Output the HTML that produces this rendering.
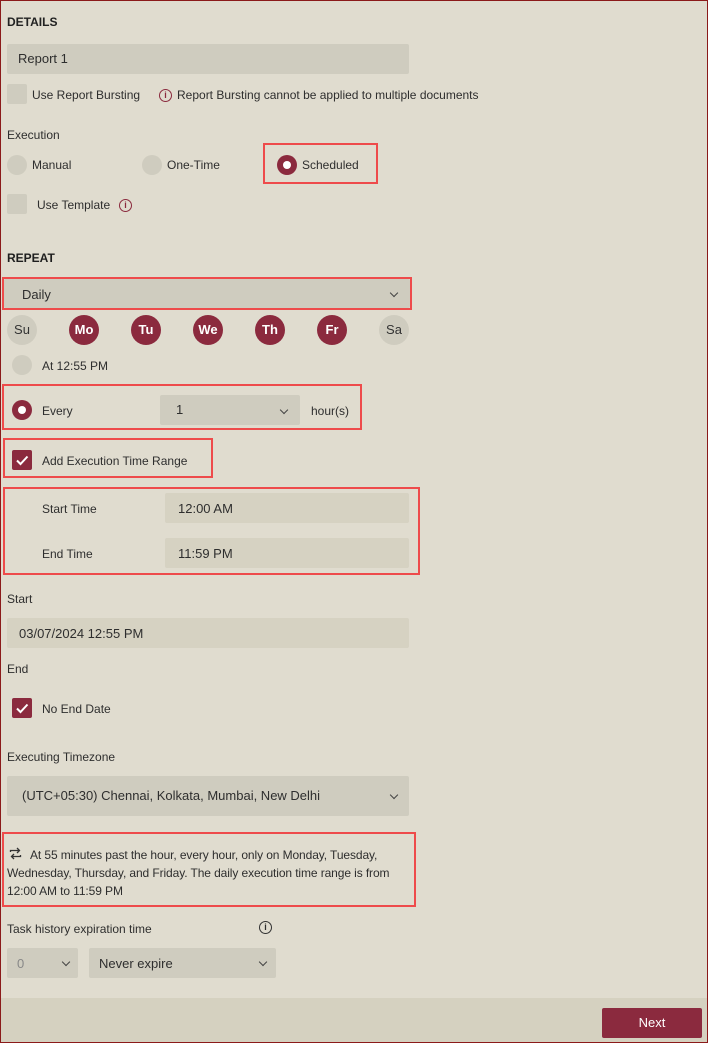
<!DOCTYPE html>
<html><head><meta charset="utf-8"><style>
*{box-sizing:border-box;margin:0;padding:0}
body{width:708px;height:1043px;background:#e0dccf;font-family:"Liberation Sans",sans-serif;font-size:12px;color:#2e2e2e;position:relative;overflow:hidden}
.frame{position:absolute;left:0;top:0;width:708px;height:1043px;border:1px solid #8b1a1a;pointer-events:none;z-index:5}
.a{position:absolute}
.t{position:absolute;white-space:nowrap;line-height:14px}
.h{font-size:12px;color:#1e1e1e}
.in{position:absolute;background:#cfccbf;border-radius:2px}
.in2{position:absolute;background:#d6d2c2;border-radius:2px}
.box{position:absolute;background:#cfccbf;border-radius:2px;width:20px;height:20px}
.chk{position:absolute;background:#8b2a3e;border-radius:2px;width:20px;height:20px}
.rad{position:absolute;width:20px;height:20px;border-radius:50%;background:#cfccbf}
.rs{position:absolute;width:20px;height:20px;border-radius:50%;background:#8b2a3e}
.rs:after{content:"";position:absolute;left:6px;top:6px;width:8px;height:8px;border-radius:50%;background:#fff}
.red{position:absolute;border:2px solid #ee4b4b}
.day{position:absolute;width:30px;height:30px;border-radius:50%;text-align:center;line-height:30px;font-size:13px;background:#cfccbf;color:#333;top:315px}
.day.on{background:#8b2a3e;color:#fff;font-weight:bold}
.chev{position:absolute;width:6px;height:6px;border-right:1.2px solid #444;border-bottom:1.2px solid #444;transform:rotate(45deg)}
.info{position:absolute;width:13px;height:13px;border:1.2px solid #8b2a3e;border-radius:50%;font-size:9px;line-height:11px;text-align:center;color:#8b2a3e;font-weight:bold}
</style></head><body>
<div class="frame"></div>
<div class="t h" style="left:7px;top:15px;font-weight:bold;color:#222">DETAILS</div>
<div class="in" style="left:7px;top:44px;width:402px;height:30px"></div>
<div class="t" style="left:18px;top:52px;font-size:13px">Report 1</div>
<div class="box" style="left:7px;top:84px"></div>
<div class="t" style="left:32px;top:88px">Use Report Bursting</div>
<div class="info" style="left:159px;top:89px">i</div>
<div class="t" style="left:177px;top:88px">Report Bursting cannot be applied to multiple documents</div>

<div class="t" style="left:7px;top:128px">Execution</div>
<div class="rad" style="left:7px;top:155px"></div>
<div class="t" style="left:32px;top:158px">Manual</div>
<div class="rad" style="left:142px;top:155px"></div>
<div class="t" style="left:167px;top:158px">One-Time</div>
<div class="red" style="left:263px;top:143px;width:115px;height:41px"></div>
<div class="rs" style="left:277px;top:155px"></div>
<div class="t" style="left:302px;top:158px">Scheduled</div>
<div class="box" style="left:7px;top:194px"></div>
<div class="t" style="left:37px;top:198px">Use Template</div>
<div class="info" style="left:119px;top:199px">i</div>

<div class="t h" style="left:7px;top:251px;font-weight:bold">REPEAT</div>
<div class="red" style="left:2px;top:277px;width:410px;height:33px"></div>
<div class="in" style="left:4px;top:279px;width:406px;height:29px"></div>
<div class="t" style="left:22px;top:288px;font-size:13px">Daily</div>
<div class="chev" style="left:391px;top:290px"></div>
<div class="day" style="left:7px">Su</div>
<div class="day on" style="left:69px">Mo</div>
<div class="day on" style="left:131px">Tu</div>
<div class="day on" style="left:193px">We</div>
<div class="day on" style="left:255px">Th</div>
<div class="day on" style="left:317px">Fr</div>
<div class="day" style="left:379px">Sa</div>
<div class="rad" style="left:12px;top:355px"></div>
<div class="t" style="left:42px;top:359px">At 12:55 PM</div>

<div class="red" style="left:2px;top:384px;width:360px;height:46px"></div>
<div class="rs" style="left:12px;top:400px"></div>
<div class="t" style="left:42px;top:404px">Every</div>
<div class="in" style="left:160px;top:395px;width:140px;height:30px"></div>
<div class="t" style="left:176px;top:403px;font-size:13px">1</div>
<div class="chev" style="left:281px;top:407px"></div>
<div class="t" style="left:311px;top:404px">hour(s)</div>

<div class="red" style="left:3px;top:438px;width:210px;height:40px"></div>
<div class="chk" style="left:12px;top:450px"><svg width="20" height="20"><path d="M5 10.5l3.5 3.5 7-7.5" stroke="#fff" stroke-width="2" fill="none"/></svg></div>
<div class="t" style="left:42px;top:454px">Add Execution Time Range</div>

<div class="red" style="left:3px;top:487px;width:417px;height:88px"></div>
<div class="t" style="left:42px;top:502px">Start Time</div>
<div class="in2" style="left:165px;top:493px;width:244px;height:30px"></div>
<div class="t" style="left:178px;top:502px;font-size:13px">12:00 AM</div>
<div class="t" style="left:42px;top:547px">End Time</div>
<div class="in2" style="left:165px;top:538px;width:244px;height:30px"></div>
<div class="t" style="left:178px;top:547px;font-size:13px">11:59 PM</div>

<div class="t" style="left:7px;top:592px">Start</div>
<div class="in2" style="left:7px;top:618px;width:402px;height:30px"></div>
<div class="t" style="left:19px;top:627px;font-size:13px">03/07/2024 12:55 PM</div>
<div class="t" style="left:7px;top:662px">End</div>
<div class="chk" style="left:12px;top:698px"><svg width="20" height="20"><path d="M5 10.5l3.5 3.5 7-7.5" stroke="#fff" stroke-width="2" fill="none"/></svg></div>
<div class="t" style="left:42px;top:702px">No End Date</div>

<div class="t" style="left:7px;top:750px">Executing Timezone</div>
<div class="in" style="left:7px;top:776px;width:402px;height:40px"></div>
<div class="t" style="left:22px;top:789px;font-size:13px">(UTC+05:30) Chennai, Kolkata, Mumbai, New Delhi</div>
<div class="chev" style="left:391px;top:792px"></div>

<div class="red" style="left:2px;top:832px;width:414px;height:75px"></div>
<div class="a" style="left:9px;top:847px"><svg width="13" height="13"><path d="M1.5 5V3.5h9M8 1l2.5 2.5L8 6M11.5 8v1.5h-9M5 12L2.5 9.5 5 7" stroke="#333" stroke-width="1.3" fill="none"/></svg></div>
<div class="a" style="left:7px;top:846px;width:400px;line-height:18px;font-size:12px;text-indent:23px;letter-spacing:-0.1px">At 55 minutes past the hour, every hour, only on Monday, Tuesday, Wednesday, Thursday, and Friday. The daily execution time range is from 12:00 AM to 11:59 PM</div>

<div class="t" style="left:7px;top:922px">Task history expiration time</div>
<div class="a" style="left:259px;top:921px;width:13px;height:13px;border:1.2px solid #333;border-radius:50%;font-size:9px;line-height:11px;text-align:center;font-weight:bold">i</div>
<div class="in" style="left:7px;top:948px;width:71px;height:30px"></div>
<div class="t" style="left:17px;top:957px;color:#888;font-size:13px">0</div>
<div class="chev" style="left:63px;top:959px"></div>
<div class="in" style="left:89px;top:948px;width:187px;height:30px"></div>
<div class="t" style="left:99px;top:957px;font-size:13px">Never expire</div>
<div class="chev" style="left:260px;top:959px"></div>

<div class="a" style="left:0;top:998px;width:708px;height:45px;background:#d5d1c0"></div>
<div class="a" style="left:602px;top:1008px;width:100px;height:30px;background:#8b2a3e;border-radius:2px;color:#fff;text-align:center;line-height:30px;font-size:13px">Next</div>
</body></html>
